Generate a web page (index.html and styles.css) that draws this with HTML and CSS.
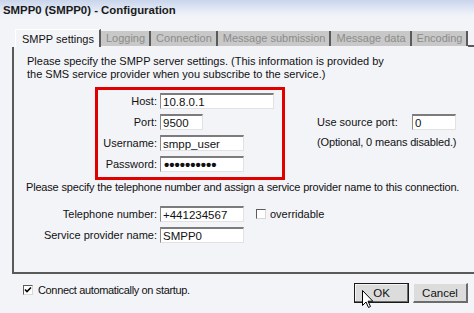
FILE: index.html
```html
<!DOCTYPE html>
<html lang="en">
<head>
  <meta charset="UTF-8">
  <title>SMPP0 (SMPP0) - Configuration</title>
  <link rel="stylesheet" href="styles.css">
</head>
<body>
<div id="window">
  <div class="titlebar">SMPP0 (SMPP0) - Configuration</div>

  <div class="tabs">
    <div class="tab active">SMPP settings</div>
    <div class="tab">Logging</div>
    <div class="tab">Connection</div>
    <div class="tab">Message submission</div>
    <div class="tab">Message data</div>
    <div class="tab">Encoding</div>
    <div class="tabfill"></div>
  </div>

  <div class="panel">
    <p class="info">Please specify the SMPP server settings. (This information is provided by<br>the SMS service provider when you subscribe to the service.)</p>

    <div class="server">
      <div class="redbox">
        <label>Host:</label><input class="fld w-host" type="text" value="10.8.0.1">
        <label>Port:</label><input class="fld w-port" type="text" value="9500">
        <label>Username:</label><input class="fld w-mid" type="text" value="smpp_user">
        <label>Password:</label><input class="fld w-mid pass" type="password" value="xxxxxxxxxx">
      </div>
      <div class="srcport">
        <label>Use source port:</label><input class="fld w-src" type="text" value="0">
        <div class="hint">(Optional, 0 means disabled.)</div>
      </div>
    </div>

    <p class="info info2">Please specify the telephone number and assign a service provider name to this connection.</p>

    <div class="phone">
      <label>Telephone number:</label><input class="fld w-mid" type="text" value="+441234567">
      <span class="check over"><span class="box"></span>overridable</span>
      <label>Service provider name:</label><input class="fld w-mid" type="text" value="SMPP0">
    </div>
  </div>

  <div class="footer">
    <span class="check auto"><span class="box">
      <svg width="8" height="8" viewBox="0 0 8 8"><path d="M1 3.5 L3 5.5 L7 1.5" fill="none" stroke="#000" stroke-width="1.6"/></svg>
    </span>Connect automatically on startup.</span>
    <div class="buttons">
      <button class="btn default">OK</button>
      <button class="btn">Cancel</button>
    </div>
  </div>

  <svg class="cursor" width="12" height="19" viewBox="0 0 12 19">
    <path d="M0.5 0.5 L0.5 15.5 L4 12 L6.5 17.5 L8.5 16.5 L6 11.2 L10.8 11.2 Z" fill="#fff" stroke="#000" stroke-width="1"/>
  </svg>
</div>
</body>
</html>
```

FILE: styles.css
```css
body {
  margin: 0;
  font-family: "Liberation Sans", Arial, sans-serif;
  font-size: 11px;
  color: #111;
}
#window {
  position: relative;
  display: flex;
  flex-direction: column;
  width: 474px;
  height: 313px;
  overflow: hidden;
  background: #f3f4f8;
}
.titlebar {
  flex: none;
  height: 20px;
  line-height: 21px;
  padding-left: 3px;
  font-weight: bold;
  font-size: 11.4px;
  color: #1a1a1a;
  background: linear-gradient(#c9d5ec, #eef1f8 70%, #f3f4f8);
}
.tabs {
  flex: none;
  display: flex;
  margin: 9px 0 0 15px;
  height: 18px;
}
.tab {
  margin-top: 2px;
  height: 15px;
  line-height: 15px;
  padding: 0 4px 0 5px;
  background: #c8c8c8;
  color: #8c8c8c;
  border-right: 2px solid #5a5a5a;
  white-space: nowrap;
}
.tab.active {
  margin-top: 0;
  height: 18px;
  line-height: 19px;
  padding: 0 5px 0 6px;
  background: #f3f4f8;
  color: #111;
  border-left: 1px solid #ffffff;
  border-top: 1px solid #ffffff;
  box-sizing: border-box;
}
.tabfill {
  flex: 1;
  margin-top: 4px;
  height: 12px;
  border-bottom: 2px solid #5a5a5a;
}
.panel {
  flex: none;
  margin-left: 12px;
  width: 480px;
  height: 227px;
  box-sizing: border-box;
  border-left: 2px solid #5a5a5a;
  border-bottom: 2px solid #5a5a5a;
  padding: 8px 0 0 13px;
}
.info {
  margin: 0;
  line-height: 13px;
  white-space: nowrap;
}
.info2 {
  margin: 1px 0 0 -1px;
  letter-spacing: -0.18px;
}
.server {
  display: flex;
  margin-top: 6px;
}
.redbox {
  margin-left: 68px;
  width: 190px;
  height: 93px;
  box-sizing: border-box;
  border: 3px solid #e00000;
  padding-top: 3px;
  display: grid;
  grid-template-columns: 59px auto;
  grid-auto-rows: 16px;
  gap: 5px 3px;
  align-items: center;
}
label {
  text-align: right;
  line-height: 16px;
}
.fld {
  box-sizing: border-box;
  height: 16px;
  margin: 0;
  padding: 0 0 0 2px;
  font-family: "Liberation Sans", Arial, sans-serif;
  font-size: 11.5px;
  color: #111;
  background: #fff;
  border-style: solid;
  border-width: 2px 1px 1px 1px;
  border-color: #7c7c7c #e2e2e2 #e2e2e2 #8a8a8a;
  outline: none;
}
.fld.pass {
  font-size: 15px;
  font-weight: bold;
  padding-left: 3px;
}
.w-host { width: 114px; }
.w-port { width: 43px; }
.w-mid { width: 84px; }
.w-src { width: 44px; }
.srcport {
  margin: 27px 0 0 32px;
  display: grid;
  grid-template-columns: 92px 44px;
  grid-auto-rows: 16px;
  gap: 2px 3px;
  align-items: center;
  align-self: flex-start;
}
.srcport label {
  text-align: left;
}
.hint {
  grid-column: 1 / 3;
  margin-top: 3px;
  white-space: nowrap;
  letter-spacing: -0.15px;
}
.phone {
  display: grid;
  grid-template-columns: 130px 84px auto;
  grid-auto-rows: 16px;
  gap: 5px 3px;
  align-items: center;
  margin-top: 12px;
}
.check {
  display: flex;
  align-items: center;
}
.box {
  display: inline-flex;
  align-items: center;
  justify-content: center;
  box-sizing: border-box;
  width: 10px;
  height: 10px;
  margin-right: 4px;
  background: #fff;
  border-style: solid;
  border-width: 1px;
  border-color: #5c5c5c #d8d8d8 #d8d8d8 #5c5c5c;
}
.over {
  margin-left: 9px;
  font-size: 11px;
}
.footer {
  flex: none;
  display: flex;
  justify-content: space-between;
  align-items: flex-start;
  padding: 9px 6px 0 23px;
}
.auto {
  margin-top: 1px;
  font-size: 11px;
  letter-spacing: -0.35px;
}
.auto .box {
  margin-right: 5px;
}
.buttons {
  display: flex;
  gap: 4px;
}
.btn {
  width: 55px;
  height: 20px;
  padding: 0;
  font-family: "Liberation Sans", Arial, sans-serif;
  font-size: 11.5px;
  color: #111;
  background: #dcdcdc;
  border-style: solid;
  border-width: 1px 2px 2px 1px;
  border-color: #f4f4f4 #6c6c6c #6c6c6c #f4f4f4;
}
.btn.default {
  border: 1px solid #1a1a1a;
  box-shadow: inset -1px -1px 0 #6c6c6c, inset 1px 1px 0 #f4f4f4;
}
.cursor {
  position: absolute;
  left: 362px;
  top: 290px;
}
```
